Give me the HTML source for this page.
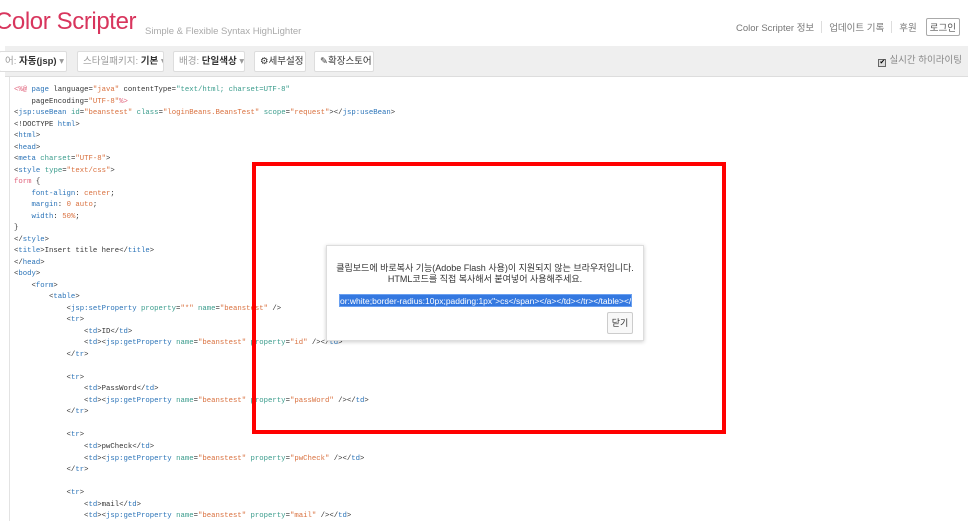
<!DOCTYPE html>
<html><head><meta charset="utf-8"><style>
*{margin:0;padding:0;box-sizing:border-box}
body{width:968px;height:521px;overflow:hidden;background:#fff;font-family:"Liberation Sans","Noto Sans CJK KR",sans-serif;position:relative}
.logo{position:absolute;left:-5px;top:7px;font-size:24px;color:#d8355d;letter-spacing:-0.4px;line-height:30px}
.sub{position:absolute;left:145px;top:26px;font-size:9.5px;color:#aaa}
.nav{position:absolute;top:18px;right:8px;font-size:9.5px;color:#777;display:flex;align-items:center}
.nav span.sep{width:1px;height:12px;background:#ddd;margin:0 7px}
.nav .lg{border:1px solid #aaa;border-radius:2px;padding:1px 3px;margin-left:9px;color:#555}
.tb{position:absolute;left:5px;top:46px;width:963px;height:31px;background:#efefef;border-bottom:1px solid #ddd}
.btn{position:absolute;top:5px;height:21px;background:#fff;border:1px solid #ddd;border-radius:2px;font-size:9.5px;color:#999;line-height:19px;padding-left:5px;white-space:nowrap;overflow:hidden}
.btn b{color:#333}
.chk{position:absolute;right:6px;top:9px;font-size:9.5px;color:#888;line-height:12px}
.chk i{display:inline-block;width:8px;height:8px;border:1px solid #666;background:#ddd;margin-right:3px;vertical-align:-1px;font-style:normal;font-size:7px;line-height:6px;color:#000}
.vl{position:absolute;left:9px;top:77px;width:1px;height:444px;background:#e3e3e3}
pre{position:absolute;left:14px;top:85px;font-family:"Liberation Mono",monospace;font-size:7.3px;line-height:11.51px;color:#333}
.t{color:#2a73b8}.a{color:#3a9c8c}.s{color:#d9703e}.p{color:#e0607a}
.red{position:absolute;left:252px;top:162px;width:474px;height:272px;border:4px solid #f00}
.dlg{position:absolute;left:326px;top:245px;width:318px;height:96px;background:#fff;border:1px solid #ddd;box-shadow:0 1px 4px rgba(0,0,0,.2);text-align:center;font-size:9px;color:#333;line-height:11px}
.dlg .m{margin-top:17px}
.inp{position:absolute;left:12px;top:48px;width:293px;height:13px;background:#3478e0;color:#fff;font-size:8.5px;line-height:12px;text-align:left;overflow:hidden;white-space:nowrap;border:1px solid #6aa0f0}
.cl{position:absolute;right:10px;top:66px;width:26px;height:22px;border:1px solid #ccc;border-radius:2px;background:#f8f8f8;line-height:20px;font-size:9px}
</style></head><body>
<div class="logo">Color Scripter</div>
<div class="sub">Simple &amp; Flexible Syntax HighLighter</div>
<div class="nav">Color Scripter 정보<span class="sep"></span>업데이트 기록<span class="sep"></span>후원<span class="lg">로그인</span></div>
<div class="tb">
<div class="btn" style="left:-6px;width:68px">어: <b>자동(jsp)</b> ▾</div>
<div class="btn" style="left:72px;width:87px">스타일패키지: <b>기본</b> ▾</div>
<div class="btn" style="left:168px;width:72px">배경: <b>단일색상</b> ▾</div>
<div class="btn" style="left:249px;width:52px;color:#333">⚙세부설정</div>
<div class="btn" style="left:309px;width:60px;color:#333">✎확장스토어</div>
<div class="chk"><i>✔</i>실시간 하이라이팅</div>
</div>
<div class="vl"></div>
<pre><span class="p">&lt;%@</span> <span class="t">page</span> language=<span class="s">"java"</span> contentType=<span class="a">"text/html; charset=UTF-8"</span>
    pageEncoding=<span class="s">"UTF-8"</span><span class="p">%&gt;</span>
&lt;<span class="t">jsp:useBean</span> <span class="a">id</span>=<span class="s">"beanstest"</span> <span class="a">class</span>=<span class="s">"loginBeans.BeansTest"</span> <span class="a">scope</span>=<span class="s">"request"</span>&gt;&lt;/<span class="t">jsp:useBean</span>&gt;
&lt;!DOCTYPE <span class="t">html</span>&gt;
&lt;<span class="t">html</span>&gt;
&lt;<span class="t">head</span>&gt;
&lt;<span class="t">meta</span> <span class="a">charset</span>=<span class="s">"UTF-8"</span>&gt;
&lt;<span class="t">style</span> <span class="a">type</span>=<span class="s">"text/css"</span>&gt;
<span class="p">form</span> {
    <span class="t">font-align</span>: <span class="s">center</span>;
    <span class="t">margin</span>: <span class="s">0 auto</span>;
    <span class="t">width</span>: <span class="s">50%</span>;
}
&lt;/<span class="t">style</span>&gt;
&lt;<span class="t">title</span>&gt;Insert title here&lt;/<span class="t">title</span>&gt;
&lt;/<span class="t">head</span>&gt;
&lt;<span class="t">body</span>&gt;
    &lt;<span class="t">form</span>&gt;
        &lt;<span class="t">table</span>&gt;
            &lt;<span class="t">jsp:setProperty</span> <span class="a">property</span>=<span class="s">"*"</span> <span class="a">name</span>=<span class="s">"beanstest"</span> /&gt;
            &lt;<span class="t">tr</span>&gt;
                &lt;<span class="t">td</span>&gt;ID&lt;/<span class="t">td</span>&gt;
                &lt;<span class="t">td</span>&gt;&lt;<span class="t">jsp:getProperty</span> <span class="a">name</span>=<span class="s">"beanstest"</span> <span class="a">property</span>=<span class="s">"id"</span> /&gt;&lt;/<span class="t">td</span>&gt;
            &lt;/<span class="t">tr</span>&gt;

            &lt;<span class="t">tr</span>&gt;
                &lt;<span class="t">td</span>&gt;PassWord&lt;/<span class="t">td</span>&gt;
                &lt;<span class="t">td</span>&gt;&lt;<span class="t">jsp:getProperty</span> <span class="a">name</span>=<span class="s">"beanstest"</span> <span class="a">property</span>=<span class="s">"passWord"</span> /&gt;&lt;/<span class="t">td</span>&gt;
            &lt;/<span class="t">tr</span>&gt;

            &lt;<span class="t">tr</span>&gt;
                &lt;<span class="t">td</span>&gt;pwCheck&lt;/<span class="t">td</span>&gt;
                &lt;<span class="t">td</span>&gt;&lt;<span class="t">jsp:getProperty</span> <span class="a">name</span>=<span class="s">"beanstest"</span> <span class="a">property</span>=<span class="s">"pwCheck"</span> /&gt;&lt;/<span class="t">td</span>&gt;
            &lt;/<span class="t">tr</span>&gt;

            &lt;<span class="t">tr</span>&gt;
                &lt;<span class="t">td</span>&gt;mail&lt;/<span class="t">td</span>&gt;
                &lt;<span class="t">td</span>&gt;&lt;<span class="t">jsp:getProperty</span> <span class="a">name</span>=<span class="s">"beanstest"</span> <span class="a">property</span>=<span class="s">"mail"</span> /&gt;&lt;/<span class="t">td</span>&gt;</pre>
<div class="red"></div>
<div class="dlg">
<div class="m">클립보드에 바로복사 기능(Adobe Flash 사용)이 지원되지 않는 브라우저입니다.<br>HTML코드를 직접 복사해서 붙여넣어 사용해주세요.</div>
<div class="inp">or:white;border-radius:10px;padding:1px"&gt;cs&lt;/span&gt;&lt;/a&gt;&lt;/td&gt;&lt;/tr&gt;&lt;/table&gt;&lt;/div&gt;</div>
<div class="cl">닫기</div>
</div>
</body></html>
